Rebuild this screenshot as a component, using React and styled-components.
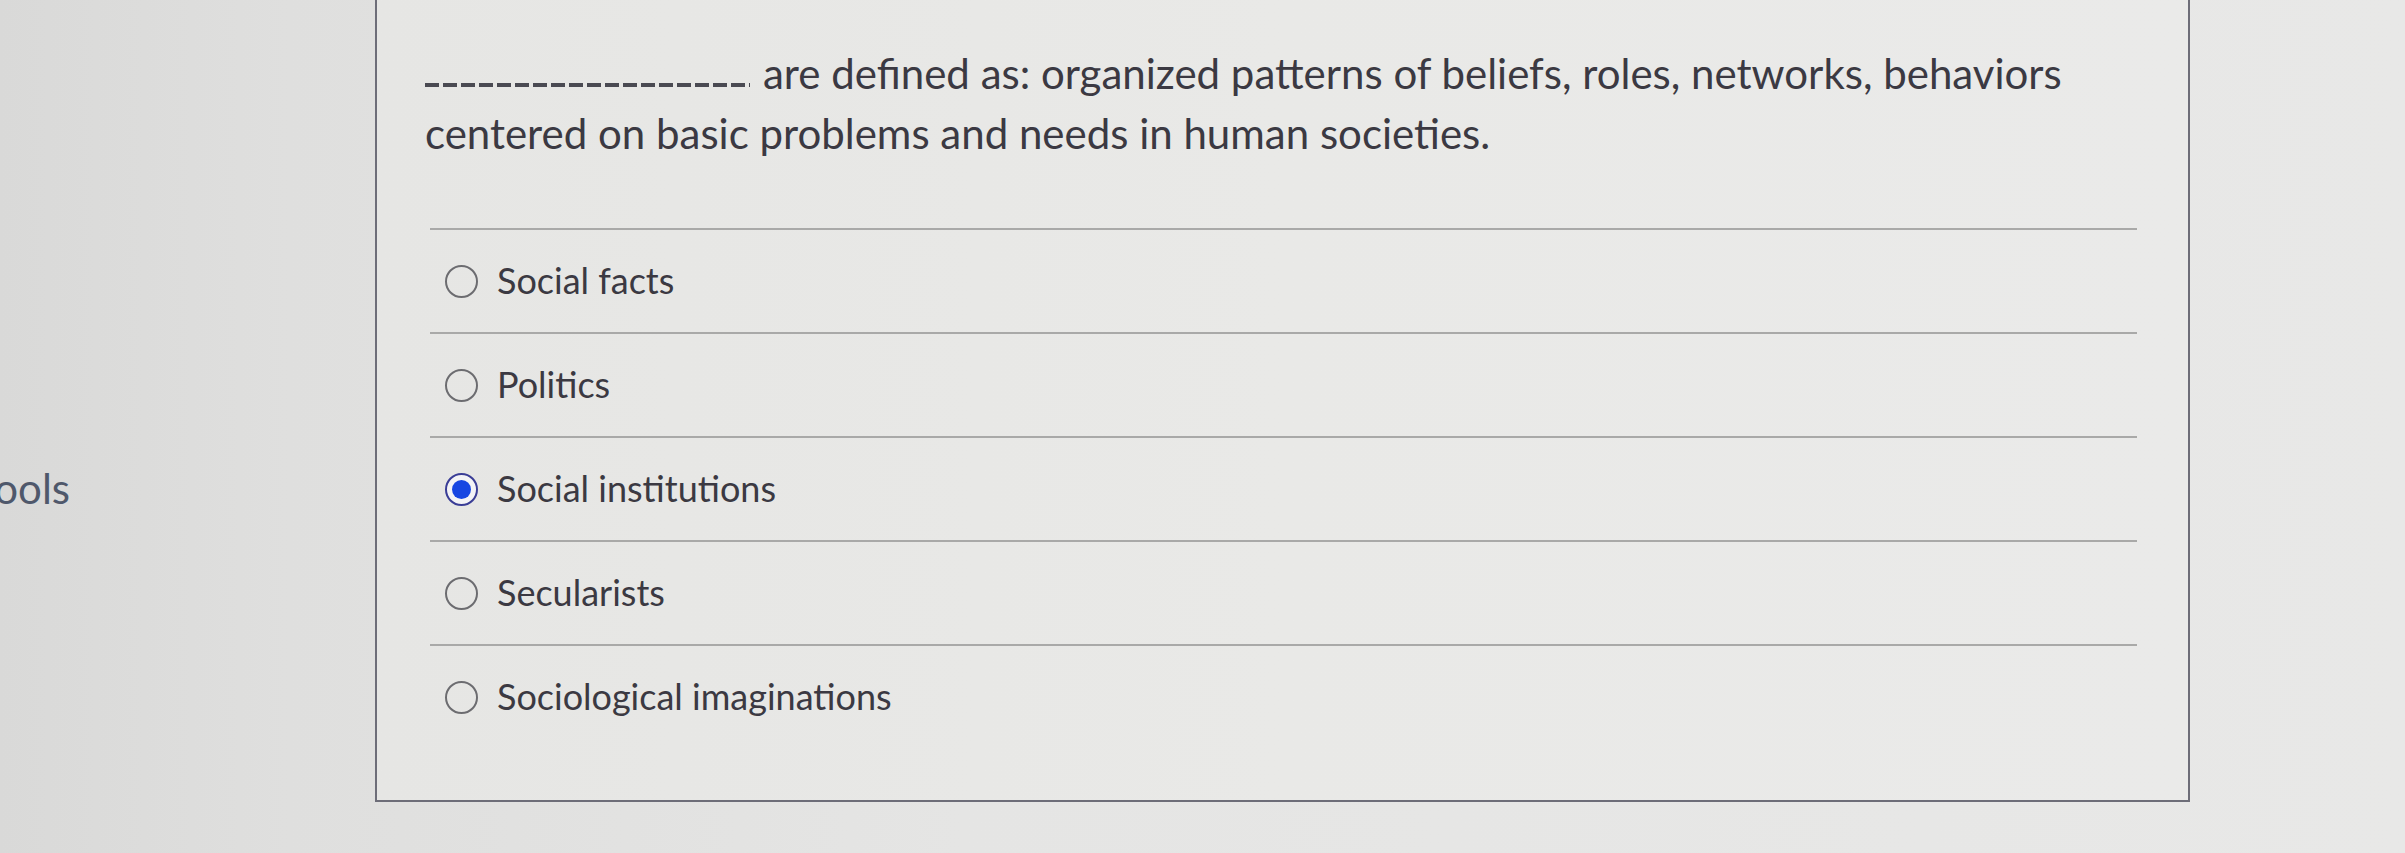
import React, { useState } from "react";
import styled, { createGlobalStyle } from "styled-components";

const GlobalStyle = createGlobalStyle`
  html, body {
    margin: 0;
    padding: 0;
  }
  body {
    width: 2405px;
    height: 853px;
    overflow: hidden;
    font-family: Lato, "Open Sans", "Noto Sans", sans-serif;
    background: linear-gradient(90deg, #d9d9d8 0%, #dfdfde 12%, #e5e5e4 40%, #e8e8e7 100%);
  }
`;

const Page = styled.div`
  display: flex;
  width: 2405px;
  height: 853px;
`;

const Sidebar = styled.aside`
  flex: none;
  width: 375px;
  box-sizing: border-box;
  padding-top: 463px;
`;

const NavClip = styled.div`
  width: 70px;
  display: flex;
  justify-content: flex-end;
  overflow: hidden;
`;

const NavLink = styled.span`
  flex: none;
  font-size: 42px;
  line-height: 1.2;
  color: #4f586b;
  white-space: nowrap;
  font-kerning: none;
`;

const Card = styled.section`
  flex: none;
  width: 1815px;
  height: 802px;
  box-sizing: border-box;
  border: 2px solid #6d6d78;
  border-top: none;
  background: linear-gradient(90deg, #e6e6e4 0%, #e9e9e7 50%, #eaeae9 100%);
  padding: 0 51px 0 48px;
`;

const Question = styled.div`
  max-width: 1690px;
  padding: 43px 0 65px 0;
  font-size: 42px;
  line-height: 60px;
  color: #3b3942;
`;

const Blank = styled.span`
  display: inline-block;
  width: 325px;
  height: 4px;
  margin-right: 13px;
  vertical-align: 2px;
  background: repeating-linear-gradient(90deg, #4a4a52 0 14px, transparent 14px 18px);
`;

const AnswerList = styled.div`
  display: flex;
  flex-direction: column;
  margin-left: 5px;
`;

const Row = styled.label`
  display: flex;
  align-items: center;
  gap: 19px;
  height: 104px;
  box-sizing: border-box;
  border-top: 2px solid #a9a9a8;
  padding-left: 15px;
  cursor: pointer;
`;

const Radio = styled.span`
  flex: none;
  width: 33px;
  height: 33px;
  box-sizing: border-box;
  border-radius: 50%;
  border: 2px solid ${(p) => (p.$checked ? "#3a3d96" : "#6c6c70")};
  background: ${(p) => (p.$checked ? "#f3f3f6" : "transparent")};
  display: flex;
  align-items: center;
  justify-content: center;
`;

const Dot = styled.span`
  width: 19px;
  height: 19px;
  border-radius: 50%;
  background: #1746e2;
`;

const AnswerText = styled.span`
  font-size: 36px;
  line-height: 1.2;
  color: #3b3942;
  white-space: nowrap;
`;

const answers = [
  "Social facts",
  "Politics",
  "Social institutions",
  "Secularists",
  "Sociological imaginations",
];

export default function App() {
  const [selected, setSelected] = useState(2);
  return (
    <>
      <GlobalStyle />
      <Page>
        <Sidebar>
          <NavClip>
            <NavLink>Tools</NavLink>
          </NavClip>
        </Sidebar>
        <Card>
          <Question>
            <Blank aria-label="blank" />
            are defined as: organized patterns of beliefs, roles, networks, behaviors
            centered on basic problems and needs in human societies.
          </Question>
          <AnswerList role="radiogroup">
            {answers.map((a, i) => (
              <Row key={a} onClick={() => setSelected(i)}>
                <Radio $checked={selected === i} role="radio" aria-checked={selected === i}>
                  {selected === i && <Dot />}
                </Radio>
                <AnswerText>{a}</AnswerText>
              </Row>
            ))}
          </AnswerList>
        </Card>
      </Page>
    </>
  );
}
